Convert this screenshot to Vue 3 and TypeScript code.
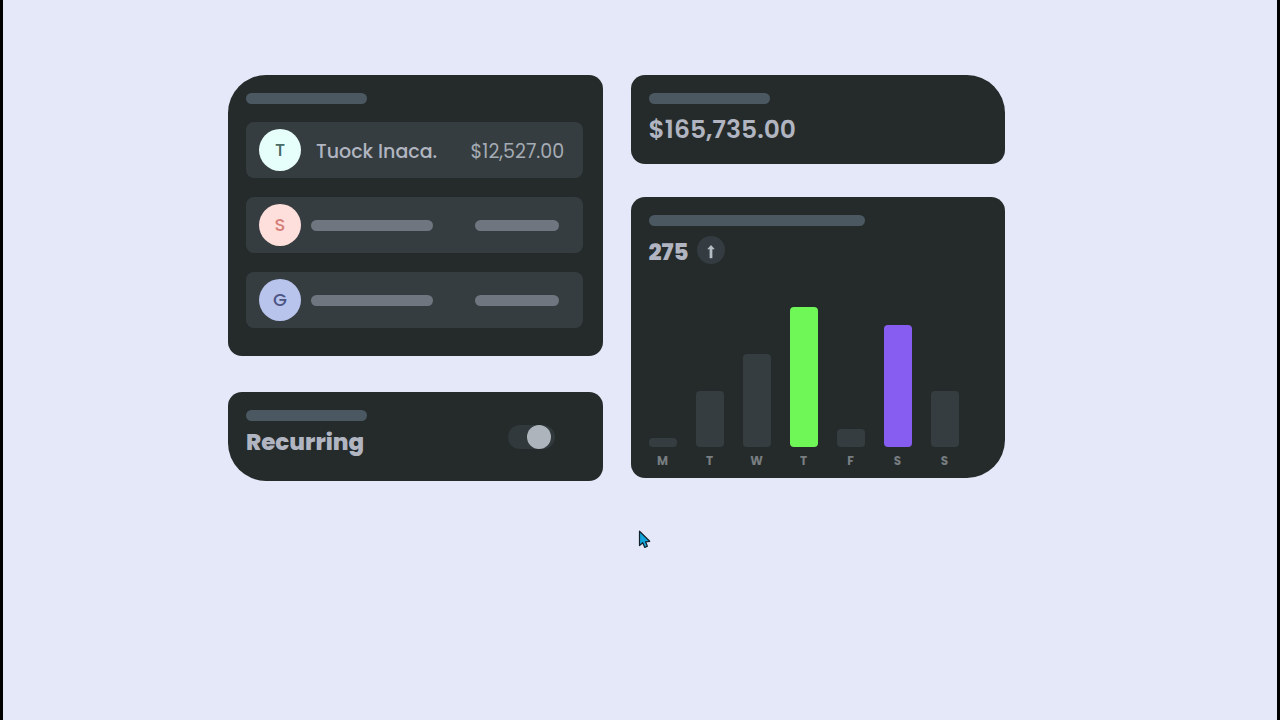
<script setup lang="ts">
import { ref } from 'vue'

interface Contact {
  initial: string
  tone: string
  name?: string
  amount?: string
}

interface Day {
  label: string
  value: number
  tone: string
}

const contacts: Contact[] = [
  { initial: 'T', tone: 'mint', name: 'Tuock Inaca.', amount: '$12,527.00' },
  { initial: 'S', tone: 'rose' },
  { initial: 'G', tone: 'blue' },
]

const days: Day[] = [
  { label: 'M', value: 9, tone: 'muted' },
  { label: 'T', value: 56, tone: 'muted' },
  { label: 'W', value: 93, tone: 'muted' },
  { label: 'T', value: 140, tone: 'green' },
  { label: 'F', value: 18, tone: 'muted' },
  { label: 'S', value: 122, tone: 'violet' },
  { label: 'S', value: 56, tone: 'muted' },
]

const recurring = ref(true)
</script>

<template>
  <main class="page">
    <div class="board">
      <div class="column left">
        <section class="card contacts">
          <div class="pill"></div>
          <ul class="rows">
            <li v-for="c in contacts" :key="c.initial" class="row">
              <span class="avatar" :class="c.tone">{{ c.initial }}</span>
              <span v-if="c.name" class="name">{{ c.name }}</span>
              <span v-else class="pill soft"></span>
              <span v-if="c.amount" class="amount">{{ c.amount }}</span>
              <span v-else class="pill soft short"></span>
            </li>
          </ul>
        </section>

        <section class="card recurring">
          <div>
            <div class="pill"></div>
            <label class="figure heavy" for="recurring">Recurring</label>
          </div>
          <input id="recurring" v-model="recurring" class="switch" type="checkbox" role="switch" />
        </section>
      </div>

      <div class="column right">
        <section class="card balance">
          <div class="pill"></div>
          <div class="figure total">$165,735.00</div>
        </section>

        <section class="card stats">
          <div class="pill wide"></div>
          <div class="headline">
            <span class="figure heavy">275</span>
            <button class="trend" type="button" aria-label="Trend up">
              <svg viewBox="0 0 28 28" width="28" height="28" aria-hidden="true">
                <path d="M14 22.2V12" stroke="#b4bcc4" stroke-width="2.8" fill="none" />
                <path d="M10.2 13.2L14 9L17.8 13.2Z" fill="#b4bcc4" />
              </svg>
            </button>
          </div>
          <div class="chart">
            <div v-for="(d, i) in days" :key="i" class="day">
              <div class="bar" :class="d.tone" :style="{ height: d.value + 'px' }"></div>
              <span class="label">{{ d.label }}</span>
            </div>
          </div>
        </section>
      </div>
    </div>

    <svg class="pointer" viewBox="0 0 14 20" width="14" height="20" aria-hidden="true">
      <path
        d="M1.5 1.2V15.6L4.7 12.7L6.8 17.4L9.4 16.2L7.5 11.8L11.7 11.3Z"
        fill="#12a5dc"
        stroke="#10212b"
        stroke-width="1.2"
        stroke-linejoin="round"
      />
    </svg>
  </main>
</template>

<style>
body {
  margin: 0;
  background: #e5e8f8;
}
</style>

<style scoped>
.page {
  position: relative;
  box-sizing: border-box;
  min-height: 100vh;
  padding: 75px 272px 40px 225px;
  border: solid #000;
  border-width: 0 3px;
  background: #e5e8f8;
  color: #b1b5c1;
  font-family: Poppins, Inter, "Open Sans", sans-serif;
}

.board {
  display: grid;
  grid-template-columns: 1fr 1fr;
  gap: 28px;
  align-items: start;
}

.column {
  display: flex;
  flex-direction: column;
}

.left {
  gap: 36px;
}

.right {
  gap: 33px;
}

.card {
  box-sizing: border-box;
  padding: 18px;
  border-radius: 14px;
  background: #252b2b;
}

.contacts {
  padding: 18px 20px 28px 18px;
  border-top-left-radius: 38px;
}

.pill {
  width: 121px;
  height: 11px;
  border-radius: 6px;
  background: #4b5861;
}

.pill.wide {
  width: 216px;
}

.pill.soft {
  width: 122px;
  background: #70767f;
}

.pill.short {
  width: 84px;
  margin: 0 4px;
}

.rows {
  display: flex;
  flex-direction: column;
  gap: 19px;
  margin: 18px 0 0;
  padding: 0;
  list-style: none;
}

.row {
  display: grid;
  grid-template-columns: 42px 1fr 92px;
  column-gap: 10px;
  align-items: center;
  box-sizing: border-box;
  height: 56px;
  padding: 0 20px 0 13px;
  border-radius: 8px;
  background: #353d40;
}

.avatar {
  width: 42px;
  border-radius: 50%;
  font-size: 18px;
  font-weight: 500;
  line-height: 42px;
  text-align: center;
}

.mint {
  background: #e6fffb;
  color: #486b68;
}

.rose {
  background: #ffdfdc;
  color: #d57f7b;
}

.blue {
  background: #b8c4ec;
  color: #4c5583;
}

.name,
.amount {
  padding-top: 4px;
  font-size: 19px;
  line-height: 28px;
  white-space: nowrap;
}

.name {
  padding-left: 5px;
  font-weight: 500;
}

.amount {
  color: #a5abb4;
}

.figure {
  display: block;
  font-size: 25px;
  font-weight: 600;
  line-height: 32px;
}

.figure.heavy {
  font-size: 23px;
  font-weight: 800;
}

.recurring {
  display: flex;
  align-items: center;
  justify-content: space-between;
  padding: 18px 48px 23px 18px;
  border-bottom-left-radius: 38px;
}

.recurring .figure {
  margin-top: 5px;
}

.switch {
  appearance: none;
  display: flex;
  align-items: center;
  box-sizing: border-box;
  width: 47px;
  height: 24px;
  margin: 5px 0 0;
  padding: 0 4px;
  border-radius: 12px;
  background: #31393c;
  cursor: pointer;
}

.switch::before {
  width: 24px;
  height: 24px;
  border-radius: 50%;
  background: #adb4bb;
  content: "";
}

.switch:checked {
  justify-content: flex-end;
}

.balance {
  border-top-right-radius: 38px;
}

.total {
  margin-top: 10px;
}

.stats {
  padding-bottom: 9px;
  border-bottom-right-radius: 38px;
}

.headline {
  display: flex;
  align-items: flex-start;
  gap: 8px;
  margin-top: 10px;
}

.trend {
  display: block;
  width: 28px;
  height: 28px;
  padding: 0;
  border: 0;
  border-radius: 50%;
  background: #343c41;
}

.trend svg {
  display: block;
}

.chart {
  display: flex;
  align-items: flex-end;
  gap: 19px;
  margin-top: 39px;
}

.day {
  display: flex;
  flex-direction: column;
  align-items: center;
  gap: 6px;
}

.bar {
  width: 28px;
  border-radius: 4px;
}

.muted {
  background: #353d40;
}

.green {
  background: #6ff758;
}

.violet {
  background: #865df0;
}

.label {
  color: #777d80;
  font-size: 12px;
  font-weight: 700;
  line-height: 16px;
}

.pointer {
  position: absolute;
  top: 530px;
  left: calc(50% - 2px);
}
</style>
